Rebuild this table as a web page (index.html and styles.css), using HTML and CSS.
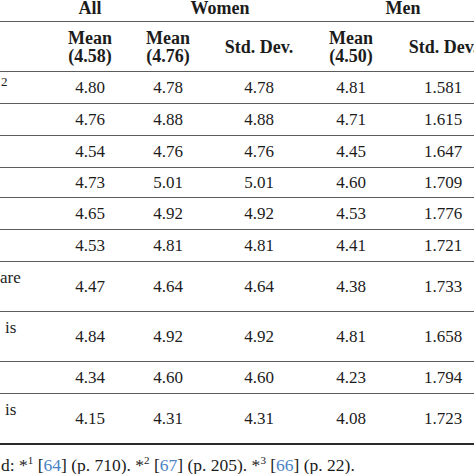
FILE: index.html
```html
<!DOCTYPE html>
<html>
<head>
<meta charset="utf-8">
<link rel="stylesheet" href="styles.css">
</head>
<body>
<div class="page">
<table class="t">
<colgroup>
<col class="c-lab"><col class="c-all"><col class="c-wm"><col class="c-ws"><col class="c-mm"><col class="c-ms">
</colgroup>
<thead>
<tr class="h1"><th class="lab"></th><th>All</th><th colspan="2">Women</th><th colspan="2">Men</th></tr>
<tr class="h2"><th class="lab"></th><th>Mean<br>(4.58)</th><th>Mean<br>(4.76)</th><th>Std. Dev.</th><th>Mean<br>(4.50)</th><th>Std. Dev.</th></tr>
</thead>
<tbody>
<tr><td class="lab"><sup class="big">2</sup></td><td>4.80</td><td>4.78</td><td>4.78</td><td>4.81</td><td>1.581</td></tr>
<tr><td class="lab"></td><td>4.76</td><td>4.88</td><td>4.88</td><td>4.71</td><td>1.615</td></tr>
<tr><td class="lab"></td><td>4.54</td><td>4.76</td><td>4.76</td><td>4.45</td><td>1.647</td></tr>
<tr class="short"><td class="lab"></td><td>4.73</td><td>5.01</td><td>5.01</td><td>4.60</td><td>1.709</td></tr>
<tr><td class="lab"></td><td>4.65</td><td>4.92</td><td>4.92</td><td>4.53</td><td>1.776</td></tr>
<tr><td class="lab"></td><td>4.53</td><td>4.81</td><td>4.81</td><td>4.41</td><td>1.721</td></tr>
<tr><td class="lab">are<br>&nbsp;</td><td>4.47</td><td>4.64</td><td>4.64</td><td>4.38</td><td>1.733</td></tr>
<tr><td class="lab ind">is<br>&nbsp;</td><td>4.84</td><td>4.92</td><td>4.92</td><td>4.81</td><td>1.658</td></tr>
<tr><td class="lab"></td><td>4.34</td><td>4.60</td><td>4.60</td><td>4.23</td><td>1.794</td></tr>
<tr class="last"><td class="lab ind">is<br>&nbsp;</td><td>4.15</td><td>4.31</td><td>4.31</td><td>4.08</td><td>1.723</td></tr>
</tbody>
</table>
<p class="note">d: *<sup>1</sup> [<a class="ref">64</a>] (p. 710). *<sup>2</sup> [<a class="ref">67</a>] (p. 205). *<sup>3</sup> [<a class="ref">66</a>] (p. 22).</p>
</div>
</body>
</html>
```
FILE: styles.css
```css
html, body {
  margin: 0;
  padding: 0;
  overflow: hidden;
  background: #ffffff;
}
.page {
  width: 474px;
  height: 474px;
  overflow: hidden;
  font-family: "Liberation Serif", "Times New Roman", serif;
  color: #1c1c1c;
}
.t {
  border-collapse: collapse;
  table-layout: fixed;
  width: 495px;
  font-size: 17px;
  line-height: 18px;
}
.c-lab { width: 51px; }
.c-all { width: 78px; }
.c-wm { width: 78px; }
.c-ws { width: 104px; }
.c-mm { width: 80px; }
.c-ms { width: 104px; }
.t th, .t td {
  padding: 7px 0 6px 0;
  text-align: center;
  vertical-align: middle;
  border-bottom: 1px solid #5c5c5c;
  white-space: nowrap;
}
.t th {
  font-weight: bold;
  font-size: 18px;
}
.t tr.h1 th {
  padding-top: 0;
  padding-bottom: 5px;
  line-height: 16px;
}
.t .lab {
  text-align: left;
  vertical-align: top;
}
.t .ind {
  padding-left: 5px;
}
.t sup {
  font-size: 11px;
  line-height: 0;
}
.t sup.big {
  font-size: 13px;
  padding-left: 1px;
}
.t tr.short td {
  padding-top: 6px;
  padding-bottom: 5px;
}
.t tr.last td {
  border-bottom: 2px solid #2a2a2a;
}
.note {
  margin: 11px 0 0 1px;
  font-size: 17.5px;
  line-height: 18px;
  white-space: nowrap;
}
.note sup {
  font-size: 11px;
  line-height: 0;
}
.ref {
  color: #4a84c4;
}
```
